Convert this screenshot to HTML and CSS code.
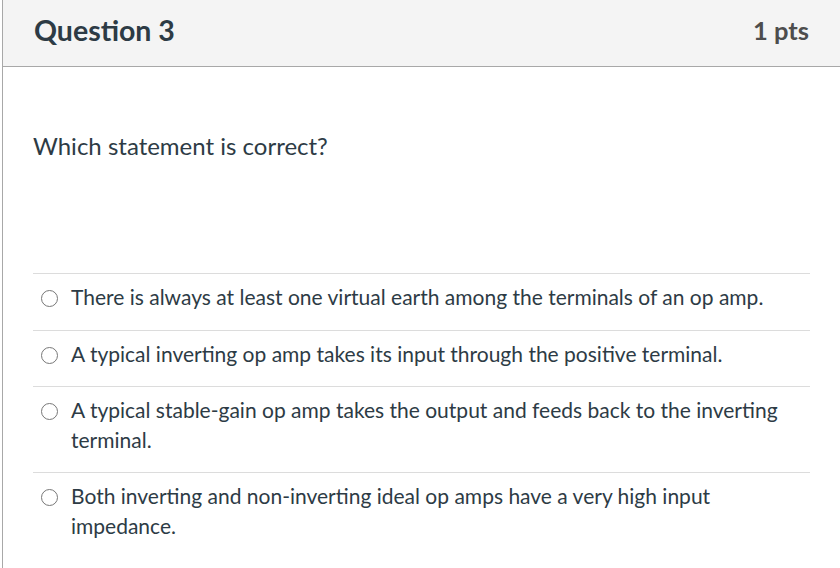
FILE: index.html
```html
<!DOCTYPE html>
<html>
<head>
<meta charset="utf-8">
<link rel="stylesheet" href="styles.css">
</head>
<body>
<div class="question">
  <div class="header">
    <h2 class="title">Question 3</h2>
    <span class="pts">1 pts</span>
  </div>
  <div class="content">
    <p class="prompt">Which statement is correct?</p>
    <div class="answers">
      <label class="answer"><span class="radio"></span><span class="text">There is always at least one virtual earth among the terminals of an op amp.</span></label>
      <label class="answer"><span class="radio"></span><span class="text">A typical inverting op amp takes its input through the positive terminal.</span></label>
      <label class="answer"><span class="radio"></span><span class="text">A typical stable-gain op amp takes the output and feeds back to the inverting terminal.</span></label>
      <label class="answer"><span class="radio"></span><span class="text">Both inverting and non-inverting ideal op amps have a very high input impedance.</span></label>
    </div>
  </div>
</div>
</body>
</html>
```

FILE: styles.css
```css
* { box-sizing: border-box; }
html, body { margin: 0; padding: 0; background: #fff; }
body {
  font-family: Lato, "Open Sans", sans-serif;
  color: #2d3b45;
  width: 840px;
  height: 568px;
  overflow: hidden;
}
.question {
  margin-left: 2px;
  border-left: 1px solid #a8a8a8;
  min-height: 568px;
}
.header {
  height: 67px;
  background: #f4f4f4;
  border-bottom: 1px solid #a8a8a8;
  display: flex;
  align-items: center;
  justify-content: space-between;
  padding: 0 31px 6px 31px;
}
.title {
  margin: 0;
  font-size: 28.5px;
  font-weight: 700;
  color: #2d3b45;
}
.pts {
  font-size: 25.5px;
  font-weight: 700;
  color: #4d4d4d;
}
.content {
  padding: 0 30px 0 30px;
}
.prompt {
  margin: 0;
  padding-top: 63px;
  font-size: 24px;
  line-height: 32px;
  height: 206px;
}
.answers {
  display: flex;
  flex-direction: column;
}
.answer {
  display: flex;
  align-items: flex-start;
  border-top: 1px solid #dcdcdc;
  padding: 8px 0 18px 8px;
  font-size: 21px;
  line-height: 29.5px;
}
.radio {
  flex: none;
  width: 17px;
  height: 17px;
  border: 1.6px solid #777;
  border-radius: 50%;
  margin-top: 8px;
  margin-right: 13px;
}
.text { flex: 1; padding-right: 30px; }
```
